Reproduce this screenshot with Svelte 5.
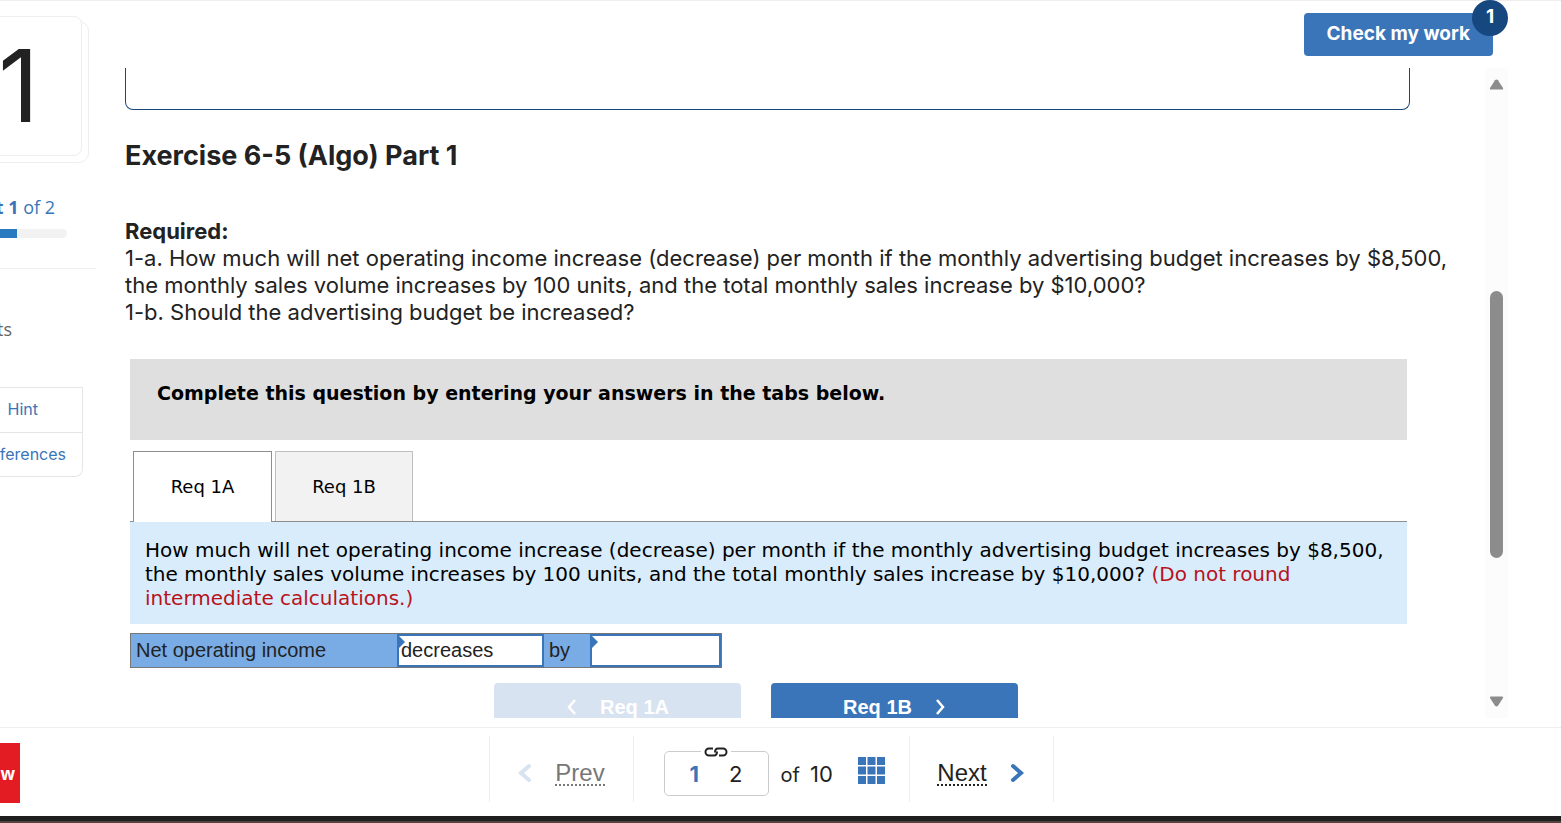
<script>
	let parts = [1, 2]
	let currentPart = 1
	let total = 10

	let tabs = ["Req 1A", "Req 1B"]
	let selectedTab = 0

	let direction = "decreases"
	let amount = ""

	function selectTab(i) {
		selectedTab = i
	}
</script>

<div class="page">
	<div class="upper">
		<aside>
			<div class="stack">
				<div class="card">1</div>
			</div>
			<div class="part"><span><b>Part 1</b> of 2</span></div>
			<div class="progress"><div class="bar"></div></div>
			<div class="points"><span>points</span></div>
			<div class="links">
				<a href="#hint">Hint</a>
				<a href="#references">References</a>
			</div>
		</aside>

		<div class="content">
			<header>
				<button class="check">
					Check my work
					<span class="badge">1</span>
				</button>
			</header>

			<div class="scroller">
				<main>
					<div class="box"></div>
					<h1>Exercise 6-5 (Algo) Part 1</h1>
					<div class="required">
						<b>Required:</b>
						<p>1-a. How much will net operating income increase (decrease) per month if the monthly advertising budget increases by $8,500, the monthly sales volume increases by 100 units, and the total monthly sales increase by $10,000?</p>
						<p>1-b. Should the advertising budget be increased?</p>
					</div>

					<div class="worksheet">
						<div class="instructions">Complete this question by entering your answers in the tabs below.</div>
						<div class="tabs">
							{#each tabs as tab, i}
								<button class:selected={selectedTab == i} on:click={() => selectTab(i)}>{tab}</button>
							{/each}
						</div>
						<div class="question">
							How much will net operating income increase (decrease) per month if the monthly advertising budget increases by $8,500, the monthly sales volume increases by 100 units, and the total monthly sales increase by $10,000? <span class="note">(Do not round intermediate calculations.)</span>
						</div>
						<table>
							<tbody>
								<tr>
									<td class="label"><label for="direction">Net operating income</label></td>
									<td class="entry direction">
										<select id="direction" bind:value={direction}>
											<option>decreases</option>
											<option>increases</option>
										</select>
									</td>
									<td class="by"><label for="amount">by</label></td>
									<td class="entry amount"><input id="amount" type="text" bind:value={amount}></td>
								</tr>
							</tbody>
						</table>
						<div class="steps">
							<button disabled>
								<svg width="12" height="18" viewBox="0 0 12 18"><path d="M9 2 3 9l6 7" /></svg>
								Req 1A
							</button>
							<button on:click={() => selectTab(1)}>
								Req 1B
								<svg width="12" height="18" viewBox="0 0 12 18"><path d="m3 2 6 7-6 7" /></svg>
							</button>
						</div>
					</div>
				</main>

				<div class="scrollbar">
					<svg width="15" height="11" viewBox="0 0 15 11"><path d="M6 1.2q1.500-1.500 3 0l5 7.800q.5 1.500-1 1.500H2Q.5 10.500 1 9z" /></svg>
					<div class="track"><div class="thumb"></div></div>
					<svg width="15" height="11" viewBox="0 0 15 11"><path d="M6 9.800q1.500 1.500 3 0L14 2q.5-1.500-1-1.500H2Q.5.5 1 2z" /></svg>
				</div>
			</div>
		</div>
	</div>

	<footer>
		<div class="logo"><span>Graw</span></div>
		<nav>
			<div class="cell">
				<svg class="faded" width="16" height="22" viewBox="0 0 16 22"><path d="m12 3-8 7 8 7" /></svg>
				<a class="prev" href="#prev">Prev</a>
			</div>
			<div class="cell middle">
				<div class="pages">
					{#each parts as part}
						<span class:current={part == currentPart}>{part}</span>
					{/each}
					<svg class="chain" width="30" height="12" viewBox="0 0 30 12">
						<path d="M12 2.500H8a3.500 3.500 0 0 0 0 7h5q3 0 3-4M18 9.500h4a3.500 3.500 0 0 0 0-7h-5q-3 0-3 4" />
					</svg>
				</div>
				<span class="total"><small>of</small> {total}</span>
				<svg class="grid" width="27" height="27" viewBox="0 0 27 27">
					{#each [0, 1, 2, 3, 4, 5, 6, 7, 8] as n}
						<rect x={(n % 3) * 9.5} y={Math.floor(n / 3) * 9.5} width="8" height="8" />
					{/each}
				</svg>
			</div>
			<div class="cell">
				<a href="#next">Next</a>
				<svg width="16" height="22" viewBox="0 0 16 22"><path d="m4 3 8 7-8 7" /></svg>
			</div>
		</nav>
	</footer>
	<div class="taskbar"></div>
</div>

<style>
	:global(body) {
		background: #fff;
		overflow: hidden;
	}

	.page {
		height: 100vh;
		display: flex;
		flex-direction: column;
		box-sizing: border-box;
		border-top: 1px solid #eee;
		font-family: Inter, sans-serif;
		color: #222;
	}

	button, select, input {
		font: inherit;
		margin: 0;
		box-sizing: border-box;
	}

	a {
		color: #3a75b9;
		text-decoration: none;
	}

	p, h1 {
		margin: 0;
	}

	.upper {
		flex: 1;
		min-height: 0;
		display: flex;
	}

	/* left column, runs off the left edge of the window */
	aside {
		width: 96px;
		flex: none;
		overflow: hidden;
		padding-top: 15px;
		box-sizing: border-box;
		font-family: "Open Sans", sans-serif;
	}

	.stack {
		width: 89px;
		height: 147px;
		box-sizing: border-box;
		padding-right: 7px;
		position: relative;
	}

	.stack::before {
		content: "";
		position: absolute;
		inset: 5px 0 0 -10px;
		border: 1px solid #eee;
		border-radius: 10px;
	}

	.card {
		position: relative;
		height: 140px;
		margin-left: -10px;
		box-sizing: border-box;
		border: 1px solid #eee;
		border-radius: 8px;
		background: #fff;
		font-family: Inter, sans-serif;
		font-size: 100px;
		line-height: 138px;
		text-align: right;
		padding-right: 42px;
	}

	.part, .points {
		display: flex;
		justify-content: flex-end;
		white-space: nowrap;
		font-size: 18px;
		line-height: 24px;
	}

	.part {
		color: #3a75b9;
		margin: 32px 41px 0 0;
	}

	.progress {
		width: 67px;
		height: 9px;
		margin-top: 10px;
		background: #f2f2f2;
		border-radius: 0 5px 5px 0;
	}

	.bar {
		width: 25%;
		height: 100%;
		background: #2a7abf;
	}

	.points {
		color: #666;
		border-top: 1px solid #eee;
		margin-top: 30px;
		padding: 48px 84px 0 0;
	}

	.links {
		width: 83px;
		box-sizing: border-box;
		margin-top: 46px;
		border: 1px solid #e6e6e6;
		border-left: 0;
		border-radius: 0 0 8px 0;
	}

	.links a {
		display: flex;
		justify-content: flex-end;
		font-family: Inter, sans-serif;
		font-size: 16px;
		line-height: 43px;
		padding-right: 16px;
	}

	.links a:first-child {
		border-bottom: 1px solid #e6e6e6;
		padding: 0 44px 1px 0;
	}

	.content {
		flex: 1;
		min-width: 0;
		display: flex;
		flex-direction: column;
	}

	header {
		display: flex;
		justify-content: flex-end;
		padding: 12px 68px 12px 0;
	}

	.check {
		position: relative;
		height: 43px;
		padding: 0 23px 2px;
		border: 0;
		border-radius: 4px;
		background: #3a75b9;
		color: #fff;
		font-size: 19px;
		font-weight: bold;
		line-height: 40px;
	}

	.badge {
		position: absolute;
		top: -13px;
		right: -15px;
		width: 36px;
		height: 36px;
		border-radius: 50%;
		background: #17477f;
		line-height: 33px;
	}

	.scroller {
		flex: 1;
		min-height: 0;
		display: flex;
		margin-bottom: 9px;
		padding: 0 53px 0 29px;
	}

	main {
		flex: 1;
		min-width: 0;
		overflow: hidden;
	}

	.box {
		height: 42px;
		box-sizing: border-box;
		margin-right: 75px;
		border: 1px solid #17477f;
		border-top: 0;
		border-radius: 0 0 8px 8px;
	}

	h1 {
		margin-top: 28px;
		font-size: 27px;
		line-height: 36px;
	}

	.required {
		margin-top: 44px;
		font-size: 22px;
		line-height: 27px;
	}

	.worksheet {
		margin: 33px 78px 0 5px;
		font-family: "DejaVu Sans", sans-serif;
		font-size: 20px;
		line-height: 24px;
		color: #000;
	}

	.instructions {
		height: 81px;
		box-sizing: border-box;
		padding: 22px 27px;
		background: #dfdfdf;
		font-size: 19px;
		font-weight: bold;
	}

	.tabs {
		display: flex;
		gap: 3px;
		margin-top: 11px;
		padding-left: 3px;
		border-bottom: 1px solid #8e8e8e;
	}

	.tabs button {
		width: 138px;
		height: 70px;
		border: 1px solid #bfbfbf;
		border-bottom: 0;
		background: #f2f2f2;
		font-size: 18px;
	}

	.tabs .selected {
		width: 139px;
		height: 71px;
		margin-bottom: -1px;
		border-color: #8e8e8e;
		background: #fff;
	}

	.question {
		padding: 16px 15px 14px;
		background: #d9ecfb;
	}

	.note {
		color: #b8121b;
	}

	table {
		margin-top: 9px;
		border: 1px solid #777;
		border-spacing: 0;
		background: #79ace5;
		font-family: "Liberation Sans", sans-serif;
		color: #222;
	}

	td {
		height: 33px;
		padding: 0;
	}

	.label {
		width: 261px;
		padding: 0 0 2px 5px;
	}

	.by {
		width: 41px;
		padding: 0 0 2px 5px;
	}

	.label, .by {
		height: 31px;
	}

	.direction {
		width: 147px;
	}

	.amount {
		width: 131px;
	}

	.entry {
		position: relative;
	}

	.entry::after {
		content: "";
		position: absolute;
		top: 1px;
		left: 1px;
		border: 7px solid transparent;
		border-left-color: #3a75b9;
		border-right: 0;
	}

	.entry select, .entry input {
		display: block;
		width: 100%;
		height: 33px;
		padding: 0 2px 2px;
		border: 2px solid #3a75b9;
		border-radius: 0;
		background: #fff;
		color: #222;
		appearance: none;
		outline: 0;
	}

	.steps {
		display: flex;
		justify-content: center;
		gap: 30px;
		margin-top: 15px;
		padding-right: 25px;
	}

	.steps button {
		width: 247px;
		height: 48px;
		display: flex;
		align-items: center;
		justify-content: center;
		gap: 22px;
		border: 0;
		border-radius: 4px;
		background: #3a75b9;
		color: #fff;
		font-family: "Liberation Sans", sans-serif;
		font-size: 20px;
		font-weight: bold;
	}

	.steps button:disabled {
		background: #d8e3f1;
	}

	.steps path {
		fill: none;
		stroke: #fff;
		stroke-width: 2.5;
	}

	.scrollbar {
		width: 23px;
		display: flex;
		flex-direction: column;
		align-items: center;
		box-sizing: border-box;
		padding: 11px 0;
		background: #fcfcfc;
	}

	.scrollbar path {
		fill: #8c8c8c;
	}

	.track {
		flex: 1;
		width: 13px;
		display: flex;
		flex-direction: column;
	}

	/* spacers above and below the thumb show the scroll position */
	.track::before {
		content: "";
		flex: 201;
	}

	.thumb {
		flex: 267;
		border-radius: 7px;
		background: #8c8c8c;
	}

	.track::after {
		content: "";
		flex: 138;
	}

	footer {
		display: flex;
		align-items: flex-start;
		height: 88px;
		border-top: 1px solid #eee;
	}

	.logo {
		width: 20px;
		height: 60px;
		margin-top: 15px;
		display: flex;
		align-items: center;
		justify-content: flex-end;
		box-sizing: border-box;
		padding-right: 5px;
		overflow: hidden;
		background: #e31b23;
		color: #fff;
		font-family: "Open Sans", sans-serif;
		font-size: 17px;
		font-weight: bold;
	}

	nav {
		flex: 1;
		display: flex;
		justify-content: center;
		padding: 8px 39px 0 0;
	}

	.cell {
		width: 144px;
		height: 66px;
		display: flex;
		align-items: center;
		justify-content: center;
		gap: 22px;
		box-sizing: border-box;
		padding-top: 9px;
		border-left: 1px solid #eee;
	}

	.cell:last-child {
		width: 145px;
		border-right: 1px solid #eee;
	}

	.cell a {
		color: #222;
		font-family: "Liberation Sans", sans-serif;
		font-size: 24px;
		line-height: 22px;
		border-bottom: 2px dotted #222;
	}

	.cell .prev {
		color: #777;
		border-color: #777;
	}

	.cell path {
		fill: none;
		stroke: #3a75b9;
		stroke-width: 4;
		stroke-linecap: round;
	}

	.cell .faded path {
		stroke: #d8e3f1;
	}

	.middle {
		width: 276px;
		gap: 12px;
		justify-content: flex-start;
		padding: 9px 24px 0 30px;
	}

	.pages {
		position: relative;
		width: 105px;
		height: 45px;
		display: flex;
		align-items: center;
		justify-content: center;
		gap: 30px;
		box-sizing: border-box;
		border: 1px solid #ccc;
		border-radius: 5px;
		font-size: 22px;
	}

	.current {
		color: #3a75b9;
		font-weight: bold;
	}

	.chain {
		position: absolute;
		top: -6px;
		left: 36px;
		background: #fff;
	}

	.cell .chain path {
		stroke: #222;
		stroke-width: 2;
		stroke-linecap: butt;
	}

	.total {
		font-size: 22px;
	}

	small {
		font-size: 20px;
		margin-right: 4px;
	}

	.grid {
		fill: #3a75b9;
		margin: 0 0 7px auto;
	}

	.taskbar {
		height: 5px;
		background: #1f1f1f;
		border-bottom: 2px solid #54433f;
	}
</style>
